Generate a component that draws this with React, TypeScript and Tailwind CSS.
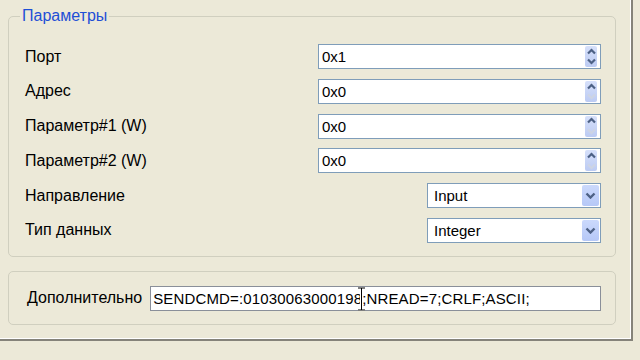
import React from 'react';

const font = { fontFamily: '"Liberation Sans", "DejaVu Sans", sans-serif' };

const Chevron: React.FC<{ up?: boolean; dim?: boolean }> = ({ up, dim }) => (
  <svg width="9" height="7" viewBox="0 0 9 7">
    <path
      d={up ? 'M1 5.5 L4.5 2 L8 5.5' : 'M1 1.5 L4.5 5 L8 1.5'}
      fill="none"
      stroke={dim ? '#cdd4e4' : '#4d6185'}
      strokeWidth="2.2"
    />
  </svg>
);

const SpinInput: React.FC<{ value: string; downEnabled?: boolean }> = ({ value, downEnabled }) => (
  <div className="w-[283px] h-[25px] bg-white border border-[#7f9db9] flex items-center pl-[3px] pr-[3px]">
    <span className="flex-1 text-[15px] text-black leading-none">{value}</span>
    <div className="w-[12px] h-[21px] flex flex-col rounded-[2px] bg-gradient-to-b from-[#d6e0fa] to-[#bccbf3]">
      <div className="flex-1 flex items-center justify-center">
        <Chevron up />
      </div>
      <div className="flex-1 flex items-center justify-center">
        <Chevron dim={!downEnabled} />
      </div>
    </div>
  </div>
);

const Combo: React.FC<{ value: string }> = ({ value }) => (
  <div className="w-[174px] h-[25px] bg-white border border-[#7f9db9] flex items-center pl-[6px] pr-[1px]">
    <span className="flex-1 text-[15px] text-black leading-none">{value}</span>
    <div className="w-[17px] h-[21px] rounded-[2px] bg-gradient-to-b from-[#cbd9fc] to-[#b6c8f7] flex items-center justify-center">
      <svg width="11" height="7" viewBox="0 0 11 7">
        <path d="M1.5 1.5 L5.5 5.5 L9.5 1.5" fill="none" stroke="#4d6185" strokeWidth="2.4" />
      </svg>
    </div>
  </div>
);

const Row: React.FC<{ label: string; children: React.ReactNode }> = ({ label, children }) => (
  <div className="h-[25px] flex items-center">
    <span className="w-[292px] text-[16px] text-black">{label}</span>
    <div className="flex-1 flex justify-end">{children}</div>
  </div>
);

export default function App() {
  return (
    <div className="w-[640px] h-[360px] bg-[#ece9d8] overflow-hidden" style={font}>
      <div className="-mt-[2px] -ml-[2px] w-[635px] h-[343px] border-r-2 border-b-2 border-[#85837a]">
        <div className="w-full h-full border-r border-b border-white pt-[18px] pl-[10px] pr-[14px] flex flex-col gap-[14px]">
          {/* Параметры */}
          <div className="relative h-[241px] rounded-[5px] border border-[#d0cfbf] pt-[27px] pl-[16px] pr-[14px] flex flex-col gap-[9.8px]">
            <span className="absolute -top-[10px] left-[11px] px-[2px] bg-[#ece9d8] text-[16px] text-[#1e4fd6] leading-[18px]">
              Параметры
            </span>
            <Row label="Порт">
              <SpinInput value="0x1" downEnabled />
            </Row>
            <Row label="Адрес">
              <SpinInput value="0x0" />
            </Row>
            <Row label="Параметр#1 (W)">
              <SpinInput value="0x0" />
            </Row>
            <Row label="Параметр#2 (W)">
              <SpinInput value="0x0" />
            </Row>
            <Row label="Направление">
              <Combo value="Input" />
            </Row>
            <Row label="Тип данных">
              <Combo value="Integer" />
            </Row>
          </div>

          {/* Дополнительно */}
          <div className="h-[54px] rounded-[5px] border border-[#d0cfbf] pl-[18px] pr-[14px] flex items-center gap-[8px]">
            <span className="text-[16px] text-black">Дополнительно</span>
            <div className="relative flex-1 h-[25px] bg-white border border-[#8a8f99] flex items-center pl-[2px]">
              <span className="text-[15px] tracking-[0.15px] text-black leading-none whitespace-nowrap">
                SENDCMD=:01030063000198;NREAD=7;CRLF;ASCII;
              </span>
              <svg className="absolute left-[206px] top-[0px]" width="9" height="24" viewBox="0 0 9 24">
                <path d="M1 1 H8 M4.5 1 V23 M1 23 H8" fill="none" stroke="#ffffff" strokeWidth="3" />
                <path d="M1 1 H8 M4.5 1 V23 M1 23 H8" fill="none" stroke="#000000" strokeWidth="1" />
              </svg>
            </div>
          </div>
        </div>
      </div>
    </div>
  );
}
